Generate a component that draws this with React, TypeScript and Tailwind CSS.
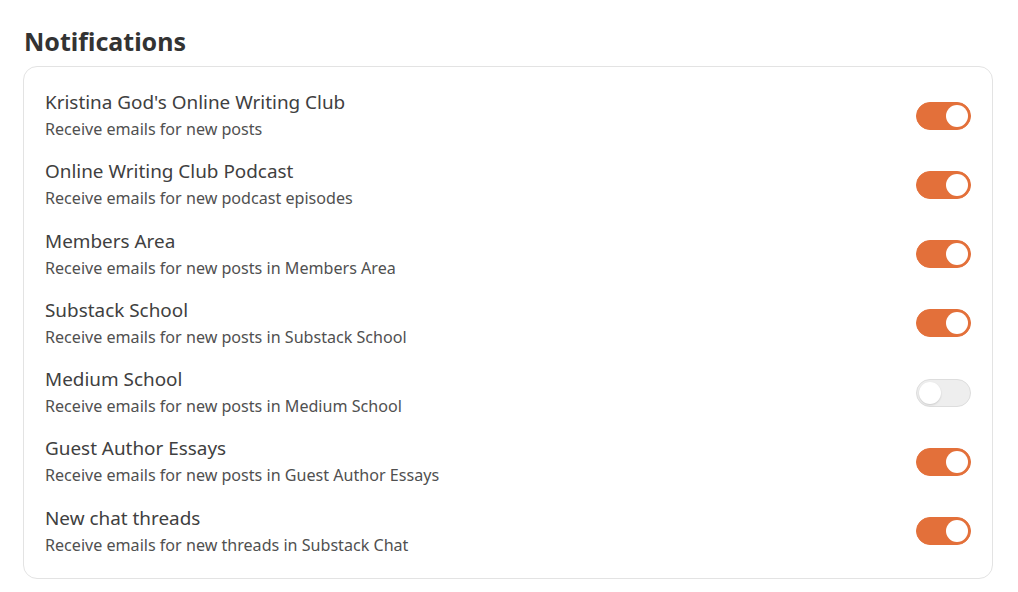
import { useState } from "react";

const items = [
  { title: "Kristina God's Online Writing Club", desc: "Receive emails for new posts", on: true },
  { title: "Online Writing Club Podcast", desc: "Receive emails for new podcast episodes", on: true },
  { title: "Members Area", desc: "Receive emails for new posts in Members Area", on: true },
  { title: "Substack School", desc: "Receive emails for new posts in Substack School", on: true },
  { title: "Medium School", desc: "Receive emails for new posts in Medium School", on: false },
  { title: "Guest Author Essays", desc: "Receive emails for new posts in Guest Author Essays", on: true },
  { title: "New chat threads", desc: "Receive emails for new threads in Substack Chat", on: true },
];

function Toggle({ on, onClick }: { on: boolean; onClick: () => void }) {
  return (
    <button
      onClick={onClick}
      className={`relative w-[55px] h-[28px] rounded-full shrink-0 border ${on ? "bg-[#e3703a] border-[#e3703a]" : "bg-[#eeeeee] border-[#dddddd]"}`}
    >
      <span
        className={`absolute top-[2px] w-[22px] h-[22px] rounded-full bg-white ${on ? "left-[29px]" : "left-[2px] shadow-[0_1px_2px_rgba(0,0,0,0.15)]"}`}
      />
    </button>
  );
}

export default function App() {
  const [state, setState] = useState(items.map((i) => i.on));

  return (
    <div className="min-h-screen bg-white px-[23px] pt-[24px] font-['Noto_Sans',sans-serif]">
      <h1 className="text-[25px] leading-[34px] font-bold text-[#333333] mb-[8px] pl-[1px]">Notifications</h1>
      <div className="border border-[#e3e3e3] rounded-[14px] w-[970px] px-[21px] pt-[22px] pb-[20px] flex flex-col gap-[16.3px]">
        {items.map((item, i) => (
          <div key={item.title} className="flex items-center justify-between">
            <div>
              <div className="text-[18.9px] leading-[26px] text-[#404040]">{item.title}</div>
              <div className="text-[16.1px] leading-[26px] mt-[1px] text-[#505050]">{item.desc}</div>
            </div>
            <Toggle on={state[i]} onClick={() => setState((s) => s.map((v, j) => (j === i ? !v : v)))} />
          </div>
        ))}
      </div>
    </div>
  );
}
